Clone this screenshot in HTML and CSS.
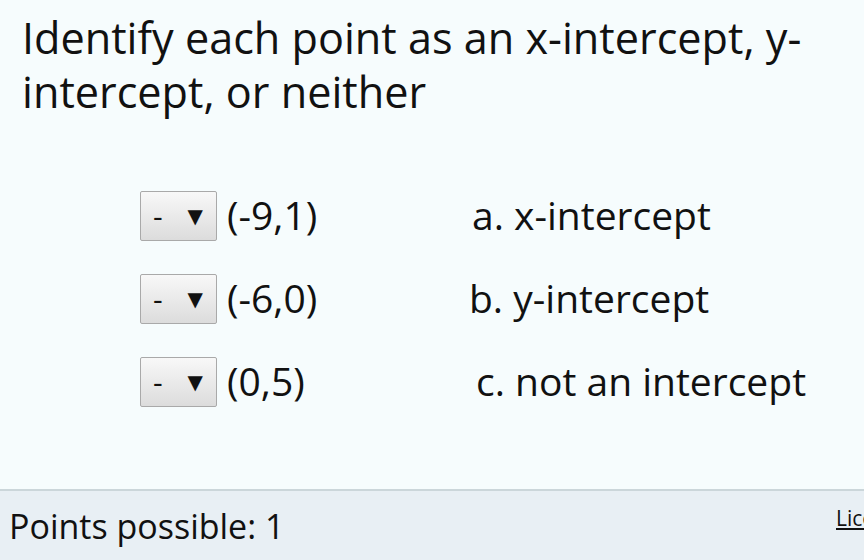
FILE: index.html
```html
<!DOCTYPE html>
<html>
<head>
<meta charset="utf-8">
<link rel="stylesheet" href="styles.css">
</head>
<body>
<div class="page">
  <div class="question">
    <p class="prompt">Identify each point as an x-intercept, y-intercept, or neither</p>
    <div class="match">
      <div class="left">
        <div class="row"><span class="sel"><span class="dash">-</span><span class="arrow">▼</span></span><span class="pt">(-9,1)</span></div>
        <div class="row"><span class="sel"><span class="dash">-</span><span class="arrow">▼</span></span><span class="pt">(-6,0)</span></div>
        <div class="row"><span class="sel"><span class="dash">-</span><span class="arrow">▼</span></span><span class="pt">(0,5)</span></div>
      </div>
      <div class="right">
        <div class="row ans a">a. x-intercept</div>
        <div class="row ans b">b. y-intercept</div>
        <div class="row ans c">c. not an intercept</div>
      </div>
    </div>
  </div>
  <div class="footer">
    <span class="points">Points possible: 1</span>
    <a class="lic" href="#">License</a>
  </div>
</div>
</body>
</html>
```
FILE: styles.css
```css
html, body {
  margin: 0;
  padding: 0;
  background: #f6fcfd;
  font-family: "Open Sans", sans-serif;
  color: #111;
}
.page {
  width: 864px;
  height: 560px;
  overflow: hidden;
  display: flex;
  flex-direction: column;
}
.question {
  height: 489px;
  padding: 0 0 0 22px;
  box-sizing: border-box;
}
.prompt {
  margin: 0;
  padding-top: 11px;
  font-size: 43.2px;
  line-height: 54px;
  width: 830px;
}
.match {
  display: flex;
  margin-top: 72px;
  padding-left: 118px;
}
.left {
  width: 332px;
}
.row {
  height: 83px;
  display: flex;
  align-items: flex-start;
  font-size: 39px;
  line-height: 48px;
}
.sel {
  width: 77px;
  height: 50px;
  box-sizing: border-box;
  border: 1px solid #a9a9a9;
  border-radius: 2px;
  background: linear-gradient(#f8f8f8, #dcdcdc);
  display: flex;
  align-items: center;
  justify-content: space-between;
  padding: 0 13px 0 12px;
  margin-right: 10px;
}
.dash { font-size: 30px; line-height: 30px; }
.arrow { font-size: 20px; font-family: "DejaVu Sans", sans-serif; }
.b { margin-left: -3px; }
.c { padding-left: 4px; }
.footer {
  flex: 1;
  background: #e8eff4;
  border-top: 2px solid #cbd6da;
  display: flex;
  justify-content: space-between;
  align-items: flex-start;
  padding-left: 9px;
  position: relative;
}
.points {
  font-size: 34px;
  line-height: 40px;
  padding-top: 15px;
}
.lic {
  position: absolute;
  left: 836px;
  top: 13px;
  font-size: 21px;
  color: #111;
  white-space: nowrap;
}
```
